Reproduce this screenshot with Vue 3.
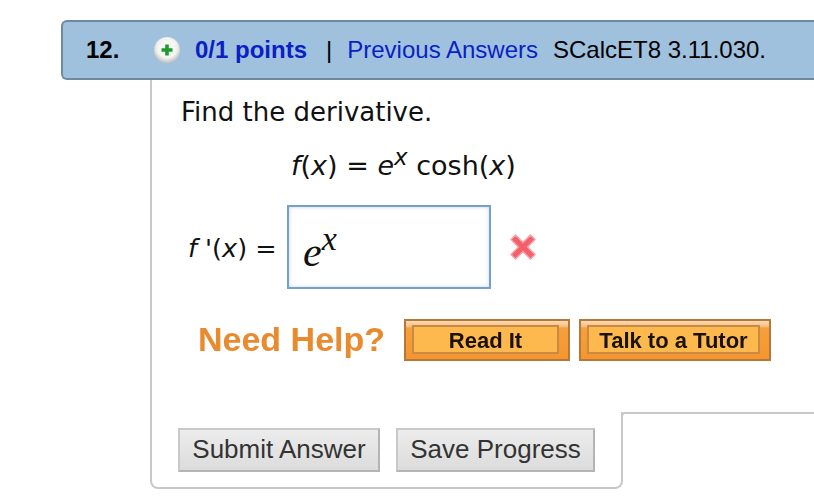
<template>
  <div class="page">
    <header class="qbar">
      <span class="qnum">12.</span>
      <svg class="plus" width="28" height="28" viewBox="0 0 28 28" aria-hidden="true">
        <defs>
          <radialGradient id="disc" cx="50%" cy="42%" r="55%">
            <stop offset="0%" stop-color="#ffffff" />
            <stop offset="70%" stop-color="#f2f2ee" />
            <stop offset="100%" stop-color="#c4c8c4" />
          </radialGradient>
        </defs>
        <circle cx="14" cy="14" r="13" fill="url(#disc)" />
        <path d="M14 8.500v11M8.500 14h11" stroke="#1f9a2a" stroke-width="3.600" />
      </svg>
      <a class="points">0/1 points</a>
      <span class="sep">|</span>
      <a class="prev">Previous Answers</a>
      <span class="ref">SCalcET8 3.11.030.</span>
    </header>

    <section class="qbody">
      <p class="prompt">Find the derivative.</p>
      <p class="formula"><i>f</i>(<i>x</i>) = <i>e</i><sup><i>x</i></sup> cosh(<i>x</i>)</p>

      <div class="answer">
        <span class="label"><i>f</i> '(<i>x</i>) =</span>
        <div class="input"><i>e</i><sup><i>x</i></sup></div>
        <svg class="wrong" width="28" height="28" viewBox="0 0 28 28" aria-hidden="true">
          <path d="M2 6.500L6.500 2 14 9.500 21.500 2 26 6.500 18.500 14 26 21.500 21.500 26 14 18.500 6.500 26 2 21.500 9.500 14z" fill="#f4606a" stroke="#f8a0a6" stroke-width="1.500" stroke-linejoin="round" />
        </svg>
      </div>

      <div class="help">
        <span class="need">Need Help?</span>
        <a class="hbtn read"><span>Read It</span></a>
        <a class="hbtn tutor"><span>Talk to a Tutor</span></a>
      </div>
    </section>

    <div class="lower">
      <div class="foot">
        <button class="sbtn submit">Submit Answer</button>
        <button class="sbtn save">Save Progress</button>
      </div>
      <div class="tail"></div>
    </div>
  </div>
</template>

<script setup>
</script>

<style>
html, body { margin: 0; background: #fff; overflow: hidden; }
</style>

<style scoped>
* { box-sizing: border-box; }
p { margin: 0; }
.page { width: 814px; height: 502px; padding-top: 20px; padding-left: 61px; font-family: "Liberation Sans", Arial, sans-serif; background: #fff; overflow: hidden; }

.qbar { height: 60px; display: flex; align-items: center; background: #9fc1de; border: 2px solid #6f8aa0; border-right: 0; border-radius: 6px 0 0 6px; font-size: 24px; color: #000; padding-left: 23px; white-space: nowrap; }
.qnum { font-weight: 700; width: 68px; }
.plus { margin-left: -1px; margin-right: 14px; flex: none; }
.points { font-weight: 700; color: #0a1fc4; margin-right: 19px; }
.sep { margin-right: 15px; }
.prev { color: #0a1fc4; margin-right: 15px; }

.qbody { margin-left: 89px; height: 332px; border-left: 2px solid #c8c8c8; padding-left: 29px; font-family: "DejaVu Sans", Verdana, sans-serif; color: #111; }
.prompt { font-size: 26px; line-height: 30px; padding-top: 17px; box-sizing: content-box; }
.formula { font-size: 27px; line-height: 30px; margin-top: 24px; padding-left: 110px; white-space: nowrap; }
.formula sup { font-size: 23px; line-height: 0; vertical-align: 10px; }

.answer { display: flex; align-items: center; margin-top: 24px; height: 84px; margin-left: 7px; }
.label { font-size: 25.500px; width: 99px; padding-top: 2px; white-space: nowrap; }
.input { width: 204px; height: 84px; border: 2px solid #76a0c8; box-shadow: inset 0 0 4px #c6d9ec; font-family: "Liberation Serif", serif; font-size: 42px; padding-left: 14px; padding-top: 20px; line-height: 50px; color: #111; }
.input sup { font-size: 34px; line-height: 0; vertical-align: 16px; }
.wrong { margin-left: 18px; filter: blur(0.5px); }

.help { display: flex; align-items: center; margin-top: 30px; margin-left: 17px; height: 42px; }
.need { font-family: "Liberation Sans", Arial, sans-serif; font-weight: 700; font-size: 34px; color: #ea8a2f; width: 206px; padding-bottom: 2px; white-space: nowrap; filter: blur(0.4px); }
.hbtn { display: block; height: 42px; border: 2px solid #b5783a; background: linear-gradient(#f7d9b0 0, #f7c48a 5px, #f5a03c 7px, #f5962c 100%); padding: 4px 9px 5px 6px; font-family: "Liberation Sans", Arial, sans-serif; font-weight: 700; font-size: 22px; color: #1a1206; }
.hbtn span { display: flex; align-items: center; justify-content: center; height: 29px; padding-top: 2px; background: #fdb94e; border: 2px solid #c98a48; white-space: nowrap; filter: blur(0.5px); }
.read { width: 166px; }
.tutor { width: 192px; margin-left: 9px; }

.lower { display: flex; margin-left: 89px; height: 77px; }
.foot { width: 473px; flex: none; border: 2px solid #c8c8c8; border-top: 0; border-radius: 0 0 8px 8px; padding: 16px 0 0 26px; display: flex; gap: 16px; align-items: flex-start; }
.tail { flex: 1; height: 8px; margin-left: -2px; background: #fff; border-top: 2px solid #c8c8c8; border-left: 2px solid #c8c8c8; border-top-left-radius: 4px; }
.sbtn { height: 44px; border: 2px solid #b4b4b4; border-top-color: #c8c8c8; border-left-color: #c8c8c8; background: linear-gradient(#ececec, #dcdcdc); font-family: "Liberation Sans", Arial, sans-serif; font-size: 26px; color: #333; padding: 0 0 2px; }
.submit { width: 202px; }
.save { width: 199px; }
</style>
